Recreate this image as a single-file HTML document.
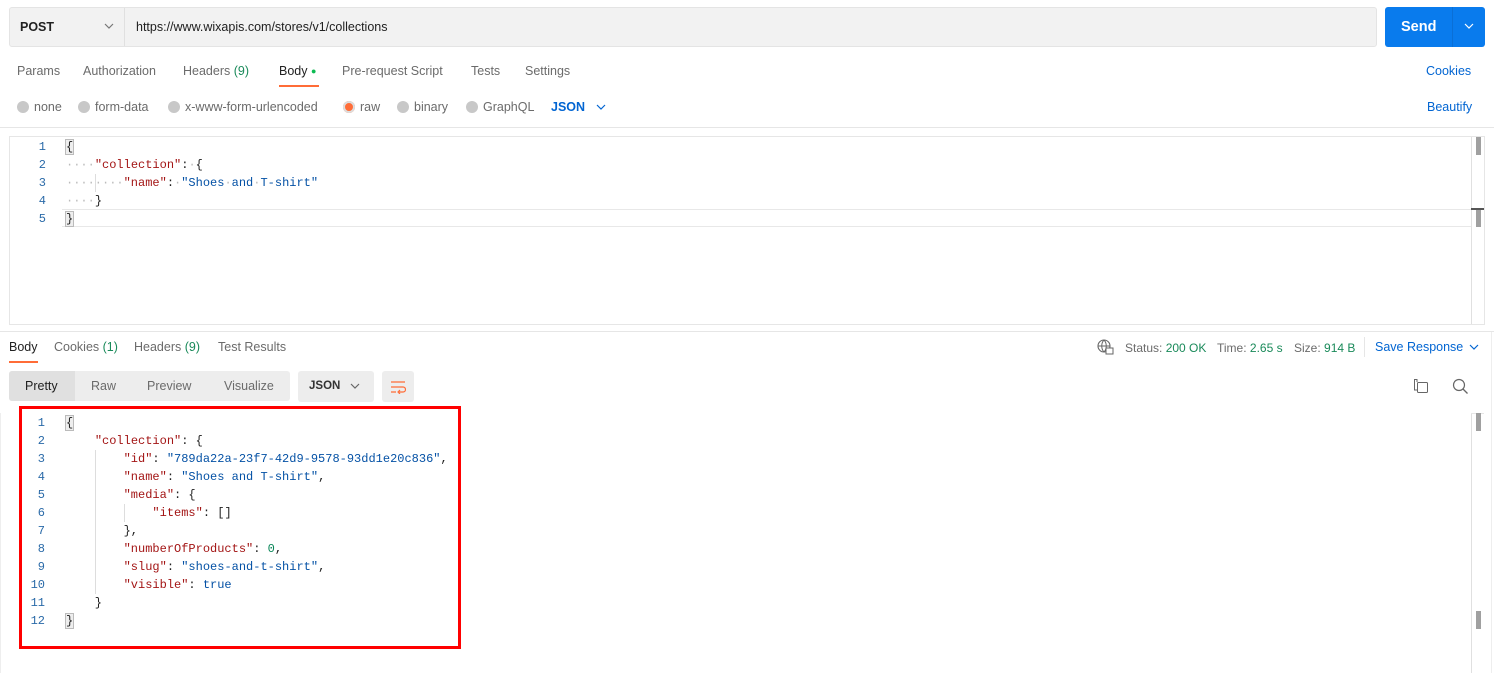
<!DOCTYPE html>
<html><head><meta charset="utf-8">
<style>
*{box-sizing:border-box;margin:0;padding:0}
body{width:1494px;height:673px;background:#fff;font-family:"Liberation Sans",sans-serif;font-size:12.5px;color:#212121;position:relative;overflow:hidden}
.a{position:absolute;white-space:nowrap}
.mono{font-family:"Liberation Mono",monospace;font-size:12px;white-space:pre}
.g{color:#6b6b6b}
.blue{color:#0265d2}
.rad{display:inline-block;width:12px;height:12px;border-radius:50%;background:#c8c8c8;vertical-align:-2px;margin-right:5px}
.ln{position:absolute;width:40px;text-align:right;color:#2a6aa8;font-family:"Liberation Mono",monospace;font-size:12px}
.k{color:#a31515}.s{color:#0451a5}.n{color:#098658}
.dot{color:#bbb}
</style></head><body>
<div class="a" style="left:9px;top:7px;width:1368px;height:40px;background:#f2f2f2;border:1px solid #e4e4e4;border-radius:3px"></div>
<div class="a" style="left:124px;top:8px;width:1px;height:38px;background:#e0e0e0"></div>
<div class="a" style="left:20px;top:20px;font-weight:bold;font-size:12.5px;color:#212121">POST</div>
<svg class="a" style="left:104px;top:22px" width="10" height="8"><path d="M1 2 L5 6 L9 2" fill="none" stroke="#777" stroke-width="1.2"/></svg>
<div class="a" style="left:136px;top:20px;font-size:12.5px;color:#212121">https://www.wixapis.com/stores/v1/collections</div>
<div class="a" style="left:1385px;top:7px;width:100px;height:40px;background:#097bed;border-radius:3px"></div>
<div class="a" style="left:1452px;top:7px;width:1px;height:40px;background:#0a6fd6"></div>
<div class="a" style="left:1401px;top:19px;color:#fff;font-weight:bold;font-size:14.5px">Send</div>
<svg class="a" style="left:1464px;top:23px" width="10" height="7"><path d="M1 1 L5 5 L9 1" fill="none" stroke="#fff" stroke-width="1.2"/></svg>
<div class="a g" style="left:17px;top:64px">Params</div>
<div class="a g" style="left:83px;top:64px">Authorization</div>
<div class="a g" style="left:183px;top:64px">Headers <span style="color:#1a8a5a">(9)</span></div>
<div class="a" style="left:279px;top:64px;color:#212121">Body <span style="color:#0cbb52;font-size:9px;vertical-align:1px">●</span></div>
<div class="a" style="left:279px;top:85px;width:40px;height:2px;background:#ff6c37"></div>
<div class="a g" style="left:342px;top:64px">Pre-request Script</div>
<div class="a g" style="left:471px;top:64px">Tests</div>
<div class="a g" style="left:525px;top:64px">Settings</div>
<div class="a blue" style="left:1426px;top:64px">Cookies</div>
<div class="a g" style="left:17px;top:100px"><span class="rad"></span>none</div>
<div class="a g" style="left:78px;top:100px"><span class="rad"></span>form-data</div>
<div class="a g" style="left:168px;top:100px"><span class="rad"></span>x-www-form-urlencoded</div>
<div class="a g" style="left:343px;top:100px"><span class="rad" style="background:#ff6c37;box-shadow:inset 0 0 0 2px #ddd"></span>raw</div>
<div class="a g" style="left:397px;top:100px"><span class="rad"></span>binary</div>
<div class="a g" style="left:466px;top:100px"><span class="rad"></span>GraphQL</div>
<div class="a blue" style="left:551px;top:100px;font-weight:bold">JSON</div>
<svg class="a" style="left:596px;top:104px" width="10" height="7"><path d="M1 1 L5 5 L9 1" fill="none" stroke="#0265d2" stroke-width="1.2"/></svg>
<div class="a blue" style="left:1427px;top:100px">Beautify</div>
<div class="a" style="left:0;top:127px;width:1494px;height:1px;background:#e6e6e6"></div>
<div class="a" style="left:9px;top:136px;width:1476px;height:189px;border:1px solid #e6e6e6"></div>
<div class="a" style="left:62px;top:209px;width:1410px;height:18px;border-top:1px solid #e8e8e8;border-bottom:1px solid #e8e8e8"></div>
<div class="a" style="left:1471px;top:137px;width:1px;height:187px;background:#e0e0e0"></div>
<div class="a" style="left:1476px;top:137px;width:5px;height:18px;background:#a0a0a0"></div>
<div class="a" style="left:1471px;top:208px;width:13px;height:2px;background:#555"></div>
<div class="a" style="left:1476px;top:210px;width:5px;height:17px;background:#a0a0a0"></div>
<div class="ln" style="left:6px;top:138px;line-height:18px">1<br>2<br>3<br>4<br>5</div>
<div class="a mono" style="left:66px;top:138px;line-height:18px"><span style="background:#eee;outline:1px solid #bbb">{</span>
<span class="dot">····</span><span class="k">"collection"</span>:<span class="dot">·</span>{
<span class="dot">········</span><span class="k">"name"</span>:<span class="dot">·</span><span class="s">"Shoes<span class="dot">·</span>and<span class="dot">·</span>T-shirt"</span>
<span class="dot">····</span>}
<span style="background:#eee;outline:1px solid #bbb">}</span></div>
<div class="a" style="left:95px;top:174px;width:1px;height:18px;background:#ddd"></div>
<div class="a" style="left:0;top:331px;width:1494px;height:1px;background:#e6e6e6"></div>
<div class="a" style="left:9px;top:340px;color:#212121">Body</div>
<div class="a" style="left:9px;top:361px;width:29px;height:2px;background:#ff6c37"></div>
<div class="a g" style="left:54px;top:340px">Cookies <span style="color:#1a8a5a">(1)</span></div>
<div class="a g" style="left:134px;top:340px">Headers <span style="color:#1a8a5a">(9)</span></div>
<div class="a g" style="left:218px;top:340px">Test Results</div>
<svg class="a" style="left:1097px;top:339px" width="17" height="16"><circle cx="7" cy="7" r="6" fill="none" stroke="#666" stroke-width="1.1"/><path d="M1 7H13M7 1C4 4 4 10 7 13M7 1C10 4 10 10 7 13" fill="none" stroke="#666" stroke-width="1"/><rect x="9" y="9" width="7" height="6" fill="#fff" stroke="#666"/></svg>
<div class="a g" style="left:1125px;top:341px;font-size:12px">Status: <span style="color:#1a8a5a">200 OK</span></div>
<div class="a g" style="left:1217px;top:341px;font-size:12px">Time: <span style="color:#1a8a5a">2.65 s</span></div>
<div class="a g" style="left:1294px;top:341px;font-size:12px">Size: <span style="color:#1a8a5a">914 B</span></div>
<div class="a" style="left:1364px;top:337px;width:1px;height:20px;background:#e6e6e6"></div>
<div class="a blue" style="left:1375px;top:340px">Save Response</div>
<svg class="a" style="left:1469px;top:344px" width="10" height="7"><path d="M1 1 L5 5 L9 1" fill="none" stroke="#0265d2" stroke-width="1.2"/></svg>
<div class="a" style="left:9px;top:371px;width:281px;height:30px;background:#ededed;border-radius:3px"></div>
<div class="a" style="left:9px;top:371px;width:66px;height:30px;background:#e0e0e0;border-radius:3px 0 0 3px"></div>
<div class="a" style="left:25px;top:379px;color:#212121">Pretty</div>
<div class="a g" style="left:91px;top:379px">Raw</div>
<div class="a g" style="left:147px;top:379px">Preview</div>
<div class="a g" style="left:224px;top:379px">Visualize</div>
<div class="a" style="left:298px;top:371px;width:76px;height:31px;background:#ededed;border-radius:3px"></div>
<div class="a" style="left:309px;top:380px;font-weight:bold;font-size:11.5px;color:#333">JSON</div>
<svg class="a" style="left:350px;top:383px" width="10" height="7"><path d="M1 1 L5 5 L9 1" fill="none" stroke="#666" stroke-width="1.2"/></svg>
<div class="a" style="left:382px;top:371px;width:32px;height:31px;background:#ededed;border-radius:3px"></div>
<svg class="a" style="left:390px;top:380px" width="16" height="14"><path d="M1 2H15M1 7H13a2.5 2.5 0 0 1 0 5H9M1 12H6M10 10L8 12L10 14" fill="none" stroke="#ff6c37" stroke-width="1.2"/></svg>
<svg class="a" style="left:1413px;top:378px" width="16" height="16"><path d="M4 4V1.5H1.5V12H4" fill="none" stroke="#666"/><rect x="4.5" y="4.5" width="10" height="10" rx="1" fill="none" stroke="#666"/></svg>
<svg class="a" style="left:1452px;top:378px" width="17" height="17"><circle cx="7" cy="7" r="5.5" fill="none" stroke="#666" stroke-width="1.2"/><path d="M11 11L15.5 15.5" stroke="#666" stroke-width="1.3"/></svg>
<div class="a" style="left:1471px;top:413px;width:1px;height:260px;background:#e0e0e0"></div>
<div class="a" style="left:1471px;top:413px;width:13px;height:1px;background:#e6e6e6"></div>
<div class="a" style="left:1476px;top:413px;width:5px;height:18px;background:#a0a0a0"></div>
<div class="a" style="left:1476px;top:611px;width:5px;height:18px;background:#a0a0a0"></div>
<div class="a" style="left:1491px;top:332px;width:1px;height:341px;background:#eee"></div>
<div class="a" style="left:0;top:413px;width:1px;height:260px;background:#eee"></div>
<div class="a" style="left:19px;top:406px;width:442px;height:243px;border:3px solid #f00"></div>
<div class="ln" style="left:5px;top:414px;line-height:18px">1<br>2<br>3<br>4<br>5<br>6<br>7<br>8<br>9<br>10<br>11<br>12</div>
<div class="a mono" style="left:66px;top:414px;line-height:18px"><span style="background:#eee;outline:1px solid #bbb">{</span>
    <span class="k">"collection"</span>: {
        <span class="k">"id"</span>: <span class="s">"789da22a-23f7-42d9-9578-93dd1e20c836"</span>,
        <span class="k">"name"</span>: <span class="s">"Shoes and T-shirt"</span>,
        <span class="k">"media"</span>: {
            <span class="k">"items"</span>: []
        },
        <span class="k">"numberOfProducts"</span>: <span class="n">0</span>,
        <span class="k">"slug"</span>: <span class="s">"shoes-and-t-shirt"</span>,
        <span class="k">"visible"</span>: <span class="s">true</span>
    }
<span style="background:#eee;outline:1px solid #bbb">}</span></div>
<div class="a" style="left:95px;top:450px;width:1px;height:144px;background:#ddd"></div>
<div class="a" style="left:124px;top:504px;width:1px;height:18px;background:#ddd"></div>
</body></html>
